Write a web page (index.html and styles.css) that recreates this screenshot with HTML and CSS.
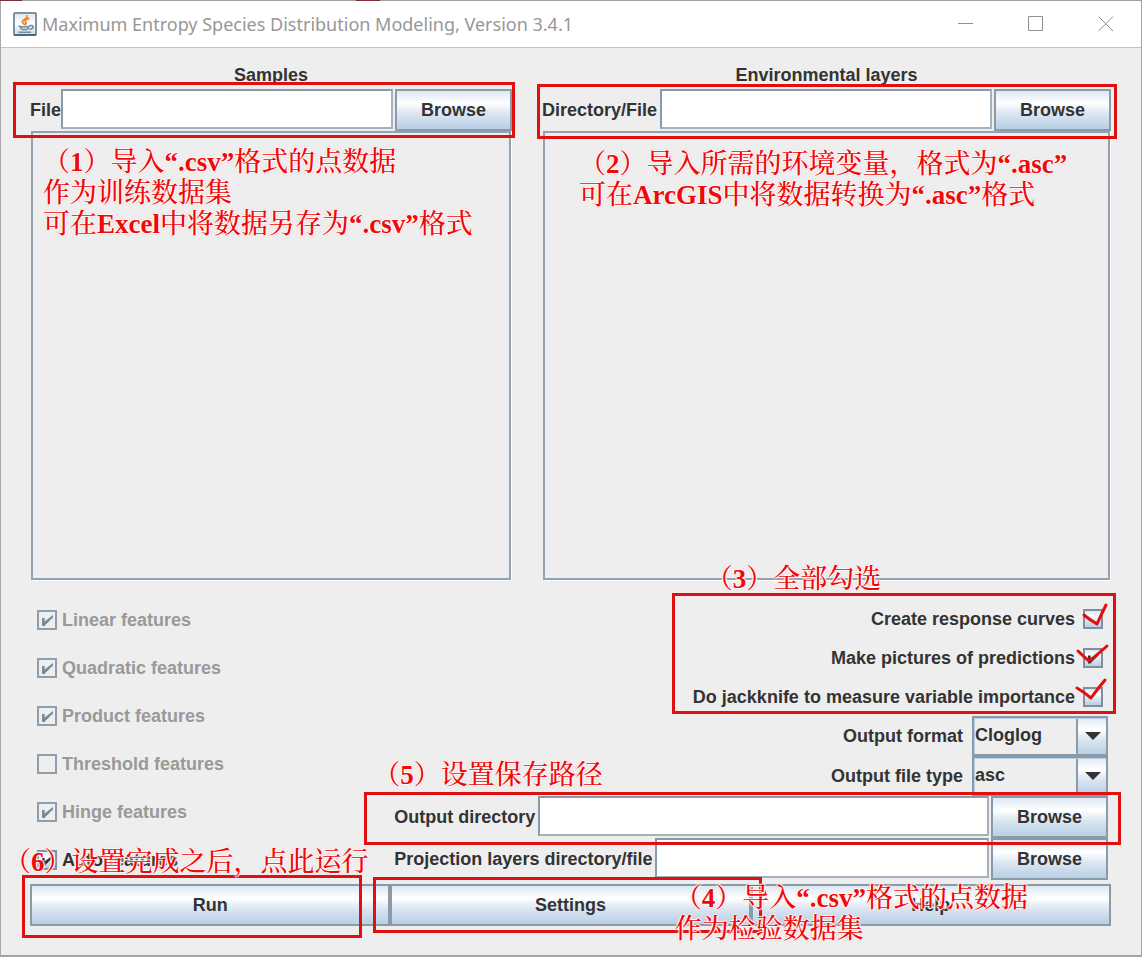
FILE: index.html
```html
<!DOCTYPE html>
<html lang="zh-CN">
<head>
<meta charset="utf-8">
<title>Maximum Entropy Species Distribution Modeling, Version 3.4.1</title>
<link rel="stylesheet" href="styles.css">
</head>
<body>
<div class="window">
  <header class="titlebar">
    <svg class="app-icon" viewBox="0 0 24 24" aria-hidden="true">
      <defs>
        <linearGradient id="tile" x1="0" y1="0" x2="0" y2="1">
          <stop offset="0" stop-color="#dfe7ec"/><stop offset=".5" stop-color="#fff"/><stop offset="1" stop-color="#c9d6df"/>
        </linearGradient>
      </defs>
      <rect x="1" y="1" width="22" height="22" rx="1" fill="url(#tile)" stroke="#7f929f" stroke-width="2"/>
      <path d="M1 23h22" stroke="#3c5a70" stroke-width="1.5"/>
      <path d="M14 4c1 3-4.800 3.500-4.600 5.800.1 1.400 1.800 1.700 2 2.700M15.800 6.500c-2.800 1.200-4.300 2.200-3.200 3.800.8 1 .6 1.700-.2 2.300" fill="none" stroke="#ee8a35" stroke-width="1.900" stroke-linecap="round"/>
      <path d="M6 14.300c3 .8 7.500.8 10.500 0M7.500 15.500c.6 1.800 1.300 2 2.300 2h3.500c1.300 0 2-.7 2.200-2M17 13.600c4.200-.9 4.300 3 .2 3.500M6 20.300h11.500" fill="none" stroke="#6c90a8" stroke-width="1.600" stroke-linecap="round"/>
    </svg>
    <h1 class="title">Maximum Entropy Species Distribution Modeling, Version 3.4.1</h1>
    <div class="controls">
      <button class="control" type="button" aria-label="Minimize"><svg viewBox="0 0 16 16"><path d="M0 7.500h15"/></svg></button>
      <button class="control" type="button" aria-label="Maximize"><svg viewBox="0 0 16 16"><path d="M.5.5h14v14H.5z"/></svg></button>
      <button class="control" type="button" aria-label="Close"><svg viewBox="0 0 16 16"><path d="M.5.5l14.500 14.500M15 .5L.5 15"/></svg></button>
    </div>
  </header>

  <main class="content">
    <div class="sources">
      <section class="source">
        <h2 class="heading">Samples</h2>
        <div class="field-row">
          <label class="label" for="samples">File</label>
          <input class="text-field" id="samples" type="text">
          <button class="button browse" type="button">Browse</button>
          <span class="mark mark-file"></span>
        </div>
        <div class="list">
          <p class="note note-1">（<b>1</b>）导入<b>“.csv”</b>格式的点数据<br>作为训练数据集<br>可在<b>Excel</b>中将数据另存为<b>“.csv”</b>格式</p>
        </div>
      </section>
      <section class="source">
        <h2 class="heading">Environmental layers</h2>
        <div class="field-row field-row-wide">
          <label class="label" for="layers">Directory/File</label>
          <input class="text-field" id="layers" type="text">
          <button class="button browse" type="button">Browse</button>
          <span class="mark mark-layers"></span>
        </div>
        <div class="list">
          <p class="note note-2">（<b>2</b>）导入所需的环境变量，格式为<b>“.asc”</b><br>可在<b>ArcGIS</b>中将数据转换为<b>“.asc”</b>格式</p>
        </div>
      </section>
    </div>

    <div class="settings">
      <div class="features">
        <label class="feature"><input class="check" type="checkbox" checked disabled><span>Linear features</span></label>
        <label class="feature"><input class="check" type="checkbox" checked disabled><span>Quadratic features</span></label>
        <label class="feature"><input class="check" type="checkbox" checked disabled><span>Product features</span></label>
        <label class="feature"><input class="check" type="checkbox" disabled><span>Threshold features</span></label>
        <label class="feature"><input class="check" type="checkbox" checked disabled><span>Hinge features</span></label>
        <label class="feature"><input class="check" type="checkbox" checked><span>Auto features</span></label>
      </div>

      <div class="options">
        <div class="toggles">
          <label class="toggle"><span>Create response curves</span><span class="check-box"><input class="check" type="checkbox"><svg class="tick" viewBox="0 0 20 20"><path d="M1 6Q7 11 14 15Q18 6 23-4"/></svg></span></label>
          <label class="toggle"><span>Make pictures of predictions</span><span class="check-box"><input class="check" type="checkbox" checked><svg class="tick" viewBox="0 0 20 20"><path d="M-5 3Q1 9 6 13Q14 7 24-2"/></svg></span></label>
          <label class="toggle"><span>Do jackknife to measure variable importance</span><span class="check-box"><input class="check" type="checkbox"><svg class="tick" viewBox="0 0 20 20"><path d="M-6 1Q1 5 8 11Q13 4 22-7"/></svg></span></label>
          <span class="mark mark-toggles"></span>
          <p class="note note-3">（<b>3</b>）全部勾选</p>
        </div>
        <div class="combo-row">
          <label class="label" for="format">Output format</label>
          <span class="combo"><select id="format"><option>Cloglog</option><option>Logistic</option><option>Cumulative</option><option>Raw</option></select></span>
        </div>
        <div class="combo-row">
          <label class="label" for="filetype">Output file type</label>
          <span class="combo"><select id="filetype"><option>asc</option><option>bil</option><option>grd</option></select></span>
        </div>
        <div class="field-row field-row-wide">
          <label class="label" for="outdir">Output directory</label>
          <input class="text-field" id="outdir" type="text">
          <button class="button browse" type="button">Browse</button>
          <span class="mark mark-output"></span>
          <p class="note note-5">（<b>5</b>）设置保存路径</p>
        </div>
        <div class="field-row field-row-wide">
          <label class="label" for="projection">Projection layers directory/file</label>
          <input class="text-field" id="projection" type="text">
          <button class="button browse" type="button">Browse</button>
        </div>
      </div>
    </div>

    <div class="actions">
      <div class="action">
        <button class="button" type="button">Run</button>
        <span class="mark mark-run"></span>
        <p class="note note-6">（<b>6</b>）设置完成之后，点此运行</p>
      </div>
      <div class="action">
        <button class="button" type="button">Settings</button>
        <span class="mark mark-settings"></span>
      </div>
      <div class="action">
        <button class="button" type="button">Help</button>
        <p class="note note-4">（<b>4</b>）导入<b>“.csv”</b>格式的点数据<br>作为检验数据集</p>
      </div>
    </div>
  </main>
</div>
</body>
</html>
```

FILE: styles.css
```css
:root {
  --edge: #7f8f9e;
  --soft: #b8cfe5;
  --face: #eeeeee;
  --ink: #333333;
  --metal: linear-gradient(#dde8f3, #ffffff 32%, #dbe6f2 60%, #b8cfe5);
}

* {
  box-sizing: border-box;
}

body {
  margin: 0;
  min-height: 100vh;
  padding: 1px 1px 2px 0;
  display: flex;
  background: linear-gradient(90deg, #7d3038 22px, #a0a0a0 22px 356px, #7d3038 356px 380px, #a0a0a0 380px) top / 100% 1px no-repeat #a4a4a4;
  color: var(--ink);
  font: bold 18px/22px "Liberation Sans", Arial, sans-serif;
}

.window {
  flex: 1;
  display: flex;
  flex-direction: column;
  border-left: 1px solid #a8a8a8;
  background: var(--face);
}

.titlebar {
  display: flex;
  align-items: center;
  height: 47px;
  padding-left: 12px;
  border-bottom: 1px solid #c3c3c3;
  background: #ffffff;
}

.app-icon {
  width: 24px;
  height: 24px;
}

.title {
  flex: 1;
  margin: 0 0 0 5px;
  color: #979797;
  font: 400 18px/24px "Noto Sans", "Open Sans", sans-serif;
  white-space: nowrap;
}

.controls {
  display: flex;
}

.control {
  display: flex;
  align-items: center;
  justify-content: center;
  width: 70px;
  height: 46px;
  padding: 0;
  border: 0;
  background: none;
}

.control svg {
  width: 16px;
  height: 16px;
  fill: none;
  stroke: #8f8f8f;
}

.content {
  flex: 1;
  display: flex;
  flex-direction: column;
  padding: 16px 30px 29px 29px;
}

.sources {
  flex: 1;
  display: grid;
  grid-template-columns: 482fr 569fr;
  gap: 30px;
}

.source {
  display: flex;
  flex-direction: column;
}

.heading {
  margin: 0 0 3px;
  font-size: 18px;
  line-height: 22px;
  text-align: center;
}

.field-row {
  position: relative;
  display: flex;
  align-items: center;
  height: 42px;
}

.label {
  white-space: nowrap;
}

.field-row-wide .label {
  margin-right: 3px;
}

.text-field {
  flex: 1;
  align-self: flex-start;
  min-width: 0;
  height: 40px;
  padding: 0 6px;
  border: 2px solid;
  border-color: #8b9aa8 #a5b2be #a5b2be #8b9aa8;
  background: #ffffff;
  font: inherit;
}

.button {
  height: 42px;
  border: 2px solid #8b9aa8;
  background: var(--metal);
  color: var(--ink);
  font: inherit;
}

.browse {
  width: 117px;
  margin-left: 2px;
  padding: 0;
}

.list {
  position: relative;
  flex: 1;
  margin: 0 1px 0 1px;
  border: 2px solid #94a1ae;
  box-shadow: 1px 1px 0 #ffffff;
}

.settings {
  display: grid;
  grid-template-columns: 1fr 2fr;
  margin-top: 16px;
}

.features {
  padding-left: 7px;
}

.feature {
  display: flex;
  align-items: center;
  gap: 5px;
  height: 48px;
}

.feature:has(:disabled) {
  color: #999999;
}

.check {
  appearance: none;
  display: block;
  flex: none;
  width: 20px;
  height: 20px;
  margin: 0;
  padding: 3px;
  border: 2px solid var(--edge);
  background: var(--metal);
}

.check:disabled {
  border-color: #909daa;
  background: none;
}

.check:checked::before {
  content: "";
  display: block;
  width: 11px;
  height: 11px;
  background: var(--ink);
  clip-path: polygon(0 27%, 24% 27%, 24% 60%, 100% 0, 100% 22%, 30% 90%, 24% 100%, 0 100%);
}

.check:checked:disabled::before {
  background: #7a8a99;
}

.options {
  display: flex;
  flex-direction: column;
  align-items: flex-end;
  justify-content: flex-end;
  padding: 0 3px 4px 4px;
}

.toggles {
  position: relative;
}

.toggle {
  display: flex;
  align-items: center;
  justify-content: flex-end;
  gap: 8px;
  height: 39px;
  padding-right: 5px;
}

.check-box {
  position: relative;
}

.tick {
  position: absolute;
  z-index: 3;
  inset: 0;
  overflow: visible;
  fill: none;
  stroke: #e60d0d;
  stroke-width: 3;
  stroke-linecap: round;
  stroke-linejoin: round;
}

.combo-row {
  display: flex;
  align-items: center;
  gap: 9px;
  height: 40px;
}

.combo {
  position: relative;
  width: 136px;
  height: 40px;
}

.combo select {
  appearance: none;
  width: 100%;
  height: 100%;
  padding: 0 32px 2px 1px;
  border: 2px solid #8b9aa8;
  border-radius: 0;
  background:
    linear-gradient(#8b9aa8, #8b9aa8) right 28px top / 2px 100% no-repeat,
    var(--metal) right / 28px 100% no-repeat,
    var(--face);
  box-shadow: inset 1px 1px 0 var(--soft);
  color: var(--ink);
  font: inherit;
}

.combo::after {
  content: "";
  position: absolute;
  top: 16px;
  right: 7px;
  width: 16px;
  height: 8px;
  background: var(--ink);
  clip-path: polygon(0 0, 100% 0, 50% 100%);
  pointer-events: none;
}

.options .field-row {
  align-self: stretch;
}

.actions {
  display: grid;
  grid-template-columns: repeat(3, 1fr);
}

.action {
  position: relative;
  display: flex;
}

.action .button {
  flex: 1;
}

/* Tutorial annotations laid over the form */
.mark {
  position: absolute;
  z-index: 2;
  border: 3px solid #e01010;
  pointer-events: none;
}

.mark-file { inset: -7px -3px -7px -17px; }
.mark-layers { inset: -5px -6px -8px -5px; }
.mark-toggles { inset: -6px -8px 2px -21px; }
.mark-output { inset: -4px -13px -7px -30px; }
.mark-run { inset: -9px 28px -12px -8px; }
.mark-settings { inset: -7px -11px -7px -17px; }

.note {
  position: absolute;
  z-index: 3;
  margin: 0;
  color: #ee0a0a;
  font: 500 27px/31px "Noto Serif CJK SC", "Noto Sans CJK SC", sans-serif;
  text-shadow: 1px 0 1px #ffffff, -1px 0 1px #ffffff, 0 1px 1px #ffffff, 0 -1px 1px #ffffff, 0 0 3px #ffb0b0;
  white-space: nowrap;
  pointer-events: none;
}

.note b {
  font-family: "Liberation Serif", "Times New Roman", serif;
  font-weight: 700;
  line-height: 20px;
}

.note-1 { top: 11px; left: 10px; }
.note-2 { top: 13px; left: 34px; }
.note-3 { top: -38px; left: 13px; }
.note-4 { top: -4px; left: -76px; }
.note-5 { top: -39px; left: -21px; }
.note-6 { top: -40px; left: -26px; }
```
